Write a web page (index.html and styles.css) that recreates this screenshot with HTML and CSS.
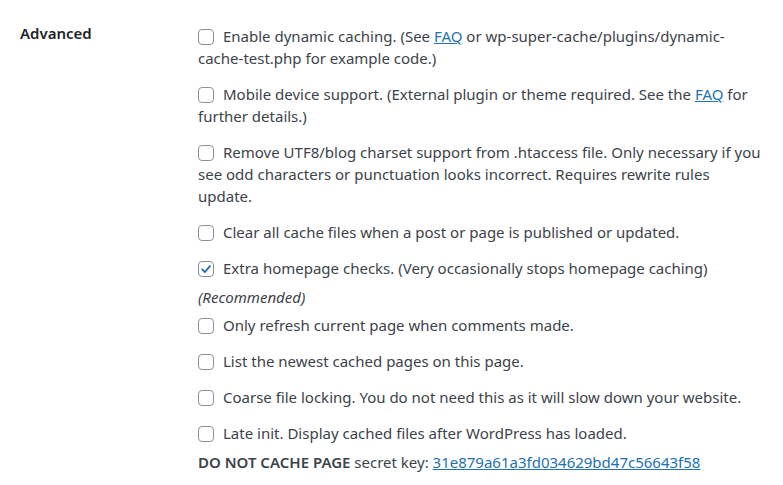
FILE: index.html
```html
<!DOCTYPE html>
<html>
<head>
<meta charset="utf-8">
<link rel="stylesheet" href="styles.css">
</head>
<body>
<div class="form-row">
  <div class="row-label">Advanced</div>
  <div class="row-field">
    <div class="option"><label><span class="cb"></span>Enable dynamic caching. (See <a href="#">FAQ</a> or wp-super-cache/plugins/dynamic-cache-test.php for example code.)</label></div>
    <div class="option"><label><span class="cb"></span>Mobile device support. (External plugin or theme required. See the <a href="#">FAQ</a> for further details.)</label></div>
    <div class="option"><label><span class="cb"></span>Remove UTF8/blog charset support from .htaccess file. Only necessary if you see odd characters or punctuation looks incorrect. Requires rewrite rules update.</label></div>
    <div class="option"><label><span class="cb"></span>Clear all cache files when a post or page is published or updated.</label></div>
    <div class="option option-tight"><label><span class="cb checked"><svg viewBox="0 0 16 16" width="16" height="16"><path d="M4.2 8.3 L6.9 11 L11.9 5.2" fill="none" stroke="#2271b1" stroke-width="1.9" stroke-linecap="round" stroke-linejoin="round"/></svg></span>Extra homepage checks. (Very occasionally stops homepage caching)</label></div>
    <div class="note"><em>(Recommended)</em></div>
    <div class="option"><label><span class="cb"></span>Only refresh current page when comments made.</label></div>
    <div class="option"><label><span class="cb"></span>List the newest cached pages on this page.</label></div>
    <div class="option"><label><span class="cb"></span>Coarse file locking. You do not need this as it will slow down your website.</label></div>
    <div class="option option-tight"><label><span class="cb"></span>Late init. Display cached files after WordPress has loaded.</label></div>
    <div class="secret"><strong>DO NOT CACHE PAGE</strong> secret key: <a href="#">31e879a61a3fd034629bd47c56643f58</a></div>
  </div>
</div>
</body>
</html>
```

FILE: styles.css
```css
html, body {
  margin: 0;
  padding: 0;
  background: #ffffff;
}
body {
  font-family: "Noto Sans", "Open Sans", sans-serif;
  font-size: 15px;
  line-height: 22px;
  color: #3c434a;
}
.form-row {
  display: flex;
  padding: 22px 0 0 20px;
}
.row-label {
  width: 178px;
  flex: none;
  font-weight: 600;
  color: #1d2327;
  line-height: 22px;
}
.row-field {
  width: 565px;
  flex: none;
  padding-top: 3px;
}
.option {
  margin-bottom: 14px;
}
.option-tight {
  margin-bottom: 7px;
}
.note {
  margin-bottom: 6px;
}
.cb {
  display: inline-block;
  box-sizing: border-box;
  width: 16px;
  height: 16px;
  border: 1px solid #8c8f94;
  border-radius: 4px;
  background: #fff;
  vertical-align: -3px;
  margin-right: 9px;
  position: relative;
}
.cb svg {
  position: absolute;
  left: -1px;
  top: -1px;
}
a {
  color: #2271b1;
  text-decoration: underline;
}
.secret strong {
  font-weight: 600;
  color: #3c434a;
}
```
